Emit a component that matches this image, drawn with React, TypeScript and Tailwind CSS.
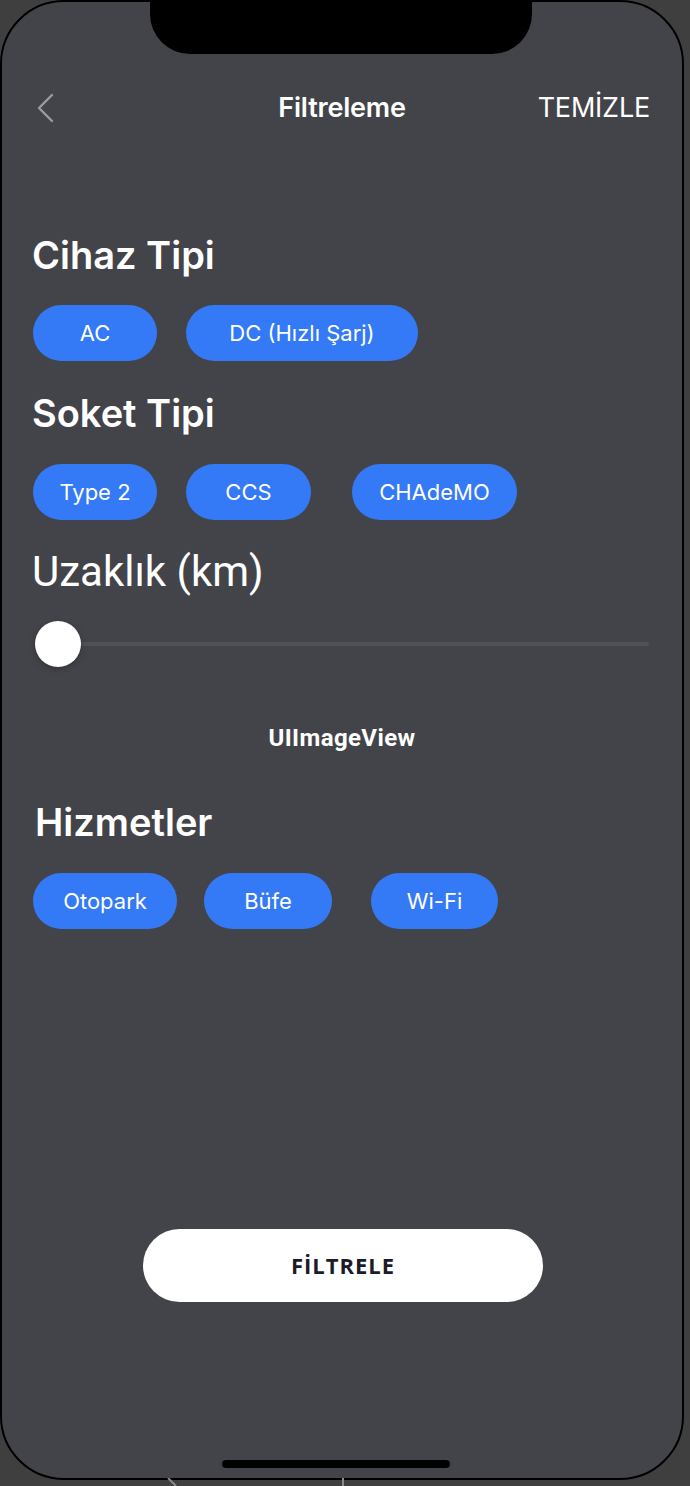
import React from "react"

const inter = { fontFamily: "Inter, 'Noto Sans', sans-serif" }

function Chip({ label, w, ml }: { label: string; w: string; ml: string }) {
  return (
    <div
      className={`${w} ${ml} flex h-[56px] items-center justify-center rounded-full bg-[#3479f6] text-[22px] text-white`}
    >
      {label}
    </div>
  )
}

function Heading({ children, ml = "" }: { children: React.ReactNode; ml?: string }) {
  return (
    <div className={`flex h-[44px] items-center text-[38px] font-semibold leading-none text-white ${ml}`}>
      {children}
    </div>
  )
}

export default function App() {
  return (
    <div
      className="relative h-[1486px] w-[690px] overflow-hidden bg-[#3f3f40]"
      style={inter}
    >
      {/* phone screen */}
      <div className="relative flex h-[1480px] w-[684px] flex-col rounded-[64px] border-2 border-black bg-[#434449] px-[32px]">
        {/* notch */}
        <div className="absolute left-[148px] top-[-2px] h-[54px] w-[382px] rounded-b-[40px] bg-black" />

        {/* header */}
        <div className="mt-[86px] flex h-[40px] items-center">
          <div className="w-[140px] pl-[1px]">
            <svg width="20" height="30" viewBox="0 0 20 30" fill="none">
              <path d="M17 2 L4 15 L17 28" stroke="#9b9ca0" strokeWidth="2.4" strokeLinecap="round" strokeLinejoin="round" />
            </svg>
          </div>
          <div className="flex-1 text-center text-[27px] font-semibold tracking-[-0.2px] text-white">Filtreleme</div>
          <div className="w-[140px] text-right text-[27px] tracking-[-0.2px] text-white">TEMİZLE</div>
        </div>

        <div className="mt-[105px]">
          <Heading ml="ml-[-2px]">Cihaz Tipi</Heading>
        </div>
        <div className="mt-[28px] flex">
          <Chip label="AC" w="w-[124px]" ml="ml-[-1px]" />
          <Chip label="DC (Hızlı Şarj)" w="w-[232px]" ml="ml-[29px]" />
        </div>

        <div className="mt-[30px]">
          <Heading ml="ml-[-2px]">Soket Tipi</Heading>
        </div>
        <div className="mt-[29px] flex">
          <Chip label="Type 2" w="w-[124px]" ml="ml-[-1px]" />
          <Chip label="CCS" w="w-[125px]" ml="ml-[29px]" />
          <Chip label="CHAdeMO" w="w-[165px]" ml="ml-[41px]" />
        </div>

        <div
          className="ml-[-2px] mt-[30px] flex h-[44px] items-center text-[42px] leading-none text-white"
          style={{ fontFamily: "Roboto, sans-serif" }}
        >
          Uzaklık (km)
        </div>

        {/* slider */}
        <div className="relative mt-[27px] flex h-[46px] items-center">
          <div className="ml-[24px] mr-[1px] h-[4px] flex-1 rounded-full bg-[#505156]" />
          <div className="absolute left-[1px] top-0 h-[46px] w-[46px] rounded-full bg-white shadow-[0_2px_6px_rgba(0,0,0,0.25)]" />
        </div>

        <div
          className="mt-[59px] flex h-[24px] items-center justify-center text-[24px] font-bold tracking-[0.4px] text-white"
          style={{ fontFamily: "Roboto, sans-serif" }}
        >
          UIImageView
        </div>

        <div className="mt-[50px]">
          <Heading ml="ml-[1px]">Hizmetler</Heading>
        </div>
        <div className="mt-[29px] flex">
          <Chip label="Otopark" w="w-[144px]" ml="ml-[-1px]" />
          <Chip label="Büfe" w="w-[128px]" ml="ml-[27px]" />
          <Chip label="Wi-Fi" w="w-[127px]" ml="ml-[39px]" />
        </div>

        <div
          className="ml-[109px] mt-[300px] flex h-[73px] w-[400px] items-center justify-center rounded-full bg-white text-[22px] font-bold tracking-[1px] text-[#1c1c28]"
          style={{ fontFamily: "'Open Sans', sans-serif" }}
        >
          FİLTRELE
        </div>

        <div className="mb-[10px] ml-[188px] mt-auto h-[8px] w-[228px] rounded-full bg-black" />
      </div>

      {/* bits of the canvas below the device */}
      <svg className="absolute bottom-0 left-[160px]" width="200" height="8" viewBox="0 0 200 8">
        <path d="M8 0 L16 8" stroke="#8a8a8a" strokeWidth="2" />
        <path d="M183 0 L183 8" stroke="#8a8a8a" strokeWidth="2" />
      </svg>
    </div>
  )
}
